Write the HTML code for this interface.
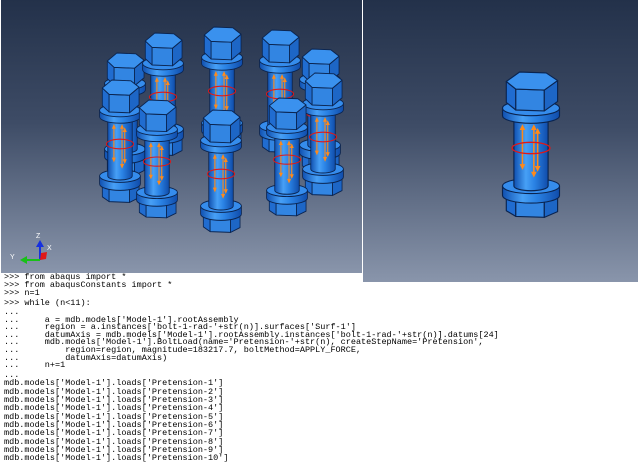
<!DOCTYPE html>
<html><head><meta charset="utf-8"><style>
html,body{margin:0;padding:0;width:639px;height:465px;overflow:hidden;background:#fff}
pre{margin:0;position:absolute;font-family:"Liberation Mono",monospace;font-size:8.5px;line-height:8px;color:#000;white-space:pre}
</style></head><body>
<svg width="639" height="465" style="position:absolute;left:0;top:0">
<defs>
<linearGradient id="bg" x1="0" y1="0" x2="0" y2="1">
<stop offset="0" stop-color="#23314a"/><stop offset="0.45" stop-color="#3e4c66"/><stop offset="1" stop-color="#8995ab"/></linearGradient>
<linearGradient id="sh" x1="0" y1="0" x2="1" y2="0">
<stop offset="0" stop-color="#1050b0"/><stop offset="0.35" stop-color="#47a0f6"/><stop offset="0.6" stop-color="#2a82e4"/><stop offset="1" stop-color="#104caa"/></linearGradient>
<g id="b" stroke="#0a2450" stroke-width="1.2" stroke-linejoin="round">
 <polygon points="-26,128 -16,132 -16,152 -26,146" fill="#206cd0"/>
 <polygon points="-16,132 14,133 14,153 -16,152" fill="#3285e2"/>
 <polygon points="14,133 28,128 28,147 14,153" fill="#1d66c6"/>
 <path d="M-30,120 L-30,130 A30,8 0 0 0 30,130 L30,120 Z" fill="url(#sh)"/>
 <ellipse cx="0" cy="120" rx="30" ry="8" fill="#358cec"/>
 <path d="M-18,44 L-18,120 A18,5 0 0 0 18,120 L18,44 Z" fill="url(#sh)"/>
 <path d="M-30,38 L-30,46 A30,8 0 0 0 30,46 L30,38 Z" fill="url(#sh)"/>
 <ellipse cx="0" cy="38" rx="30" ry="8" fill="#358cec"/>
 <polygon points="-26,10 -16,18 -16,40 -26,32" fill="#206cd0"/>
 <polygon points="-16,18 14,19 14,41 -16,40" fill="#3285e2"/>
 <polygon points="14,19 28,9 28,31 14,41" fill="#1d66c6"/>
 <polygon points="-26,10 -12,0 16,1 28,9 14,19 -16,18" fill="#3a91ee"/>
 <g stroke="#ff8a1a" stroke-width="1.6" fill="#ff8a1a">
  <line x1="-9" y1="58" x2="-9" y2="100"/><line x1="3" y1="58" x2="3" y2="108"/><line x1="7" y1="62" x2="7" y2="102"/>
  <polygon points="-12,61 -9,55 -6,61" stroke="none"/><polygon points="-12,97 -9,103 -6,97" stroke="none"/>
  <polygon points="0,61 3,55 6,61" stroke="none"/><polygon points="0,105 3,111 6,105" stroke="none"/>
  <polygon points="4,65 7,59 10,65" stroke="none"/><polygon points="4,99 7,105 10,99" stroke="none"/>
 </g>
 <ellipse cx="0" cy="80" rx="20" ry="6" fill="none" stroke="#e01818" stroke-width="1.4"/>
</g>
</defs>
<rect x="1" y="0" width="361" height="273" fill="url(#bg)"/>
<rect x="363" y="0" width="275" height="282" fill="url(#bg)"/>
<g>
<use href="#b" transform="translate(125,53) scale(0.68,0.8)"/>
<use href="#b" transform="translate(163,33) scale(0.68,0.8)"/>
<use href="#b" transform="translate(222,27) scale(0.68,0.8)"/>
<use href="#b" transform="translate(280,30) scale(0.68,0.8)"/>
<use href="#b" transform="translate(320,49) scale(0.68,0.8)"/>
<use href="#b" transform="translate(120,80) scale(0.68,0.8)"/>
<use href="#b" transform="translate(323,73) scale(0.68,0.8)"/>
<use href="#b" transform="translate(157,100) scale(0.68,0.77)"/>
<use href="#b" transform="translate(287,98) scale(0.68,0.77)"/>
<use href="#b" transform="translate(221,110) scale(0.68,0.8)"/>
</g>
<use href="#b" transform="translate(531,72) scale(0.95)"/>
<g stroke-width="2">
<line x1="40" y1="260" x2="40" y2="246" stroke="#1530e0"/><polygon points="36,247 40,240 44,247" fill="#1530e0"/>
<line x1="40" y1="260" x2="26" y2="260" stroke="#18c018"/><polygon points="27,256 20,260 27,264" fill="#18c018"/>
<polygon points="40,260 41,253 47,252 46,259" fill="#e01818"/>
</g>
<g font-family="Liberation Sans,sans-serif" font-size="7" fill="#fff">
<text x="36" y="238">Z</text><text x="47" y="250">X</text><text x="10" y="259">Y</text></g>
</svg>
<pre style="left:4px;top:273px">&gt;&gt;&gt; from abaqus import *
&gt;&gt;&gt; from abaqusConstants import *
&gt;&gt;&gt; n=1</pre>
<pre style="left:4px;top:299px">&gt;&gt;&gt; while (n&lt;11):</pre>
<pre style="left:4px;top:309px;line-height:7.6px">...
...     a = mdb.models['Model-1'].rootAssembly
...     region = a.instances['bolt-1-rad-'+str(n)].surfaces['Surf-1']
...     datumAxis = mdb.models['Model-1'].rootAssembly.instances['bolt-1-rad-'+str(n)].datums[24]
...     mdb.models['Model-1'].BoltLoad(name='Pretension-'+str(n), createStepName='Pretension',
...         region=region, magnitude=183217.7, boltMethod=APPLY_FORCE,
...         datumAxis=datumAxis)
...     n+=1</pre>
<pre style="left:4px;top:371px;line-height:8.33px">...
mdb.models['Model-1'].loads['Pretension-1']
mdb.models['Model-1'].loads['Pretension-2']
mdb.models['Model-1'].loads['Pretension-3']
mdb.models['Model-1'].loads['Pretension-4']
mdb.models['Model-1'].loads['Pretension-5']
mdb.models['Model-1'].loads['Pretension-6']
mdb.models['Model-1'].loads['Pretension-7']
mdb.models['Model-1'].loads['Pretension-8']
mdb.models['Model-1'].loads['Pretension-9']
mdb.models['Model-1'].loads['Pretension-10']</pre>
</body></html>
